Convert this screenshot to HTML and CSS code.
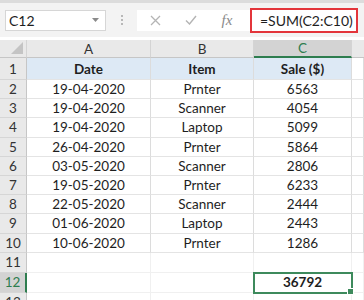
FILE: index.html
```html
<!DOCTYPE html>
<html lang="en">
<head>
    <meta charset="UTF-8">
    <meta name="viewport" content="width=device-width, initial-scale=1.0">
    <title>Sales sheet</title>
    <link rel="stylesheet" href="styles.css">
</head>
<body>
    <!-- Name box and formula bar -->
    <header class="toolbar">
        <div class="namebox">
            <span>C12</span>
            <svg class="caret" width="7" height="4" viewBox="0 0 7 4"><path d="M0 0h7L3.5 4z" fill="#8a8a8a"/></svg>
        </div>
        <div class="grip"><i></i><i></i><i></i></div>
        <div class="formula">
            <span class="btn">
                <svg width="11" height="11" viewBox="0 0 11 11"><path d="M1 1l9 9M10 1l-9 9" stroke="#b4b4b4" stroke-width="1.3"/></svg>
            </span>
            <span class="btn">
                <svg width="12" height="10" viewBox="0 0 12 10"><path d="M1 5.5l3.5 3.5L11 1" stroke="#b4b4b4" stroke-width="1.4" fill="none"/></svg>
            </span>
            <span class="btn fx">fx</span>
            <div class="input">=SUM(C2:C10)</div>
        </div>
    </header>

    <!-- Worksheet -->
    <main class="sheet">
        <div class="corner"><span class="tri"></span></div>
        <div class="colhead">A</div>
        <div class="colhead">B</div>
        <div class="colhead active">C</div>
        <div class="colhead blank"></div>

        <div class="rowhead">1</div>
        <div class="cell title">Date</div>
        <div class="cell title">Item</div>
        <div class="cell title">Sale ($)</div>
        <div class="cell"></div>

        <div class="rowhead">2</div><div class="cell">19-04-2020</div><div class="cell">Prnter</div><div class="cell">6563</div><div class="cell"></div>
        <div class="rowhead">3</div><div class="cell">19-04-2020</div><div class="cell">Scanner</div><div class="cell">4054</div><div class="cell"></div>
        <div class="rowhead">4</div><div class="cell">19-04-2020</div><div class="cell">Laptop</div><div class="cell">5099</div><div class="cell"></div>
        <div class="rowhead">5</div><div class="cell">26-04-2020</div><div class="cell">Prnter</div><div class="cell">5864</div><div class="cell"></div>
        <div class="rowhead">6</div><div class="cell">03-05-2020</div><div class="cell">Scanner</div><div class="cell">2806</div><div class="cell"></div>
        <div class="rowhead">7</div><div class="cell">19-05-2020</div><div class="cell">Prnter</div><div class="cell">6233</div><div class="cell"></div>
        <div class="rowhead">8</div><div class="cell">22-05-2020</div><div class="cell">Scanner</div><div class="cell">2444</div><div class="cell"></div>
        <div class="rowhead">9</div><div class="cell">01-06-2020</div><div class="cell">Laptop</div><div class="cell">2443</div><div class="cell"></div>
        <div class="rowhead">10</div><div class="cell">10-06-2020</div><div class="cell">Prnter</div><div class="cell">1286</div><div class="cell"></div>

        <div class="rowhead">11</div><div class="cell empty"></div><div class="cell empty"></div><div class="cell empty"></div><div class="cell empty"></div>
        <div class="rowhead active">12</div><div class="cell empty"></div><div class="cell empty"></div>
        <div class="cell total">36792<span class="handle"></span></div>
        <div class="cell empty"></div>
        <div class="rowhead">13</div><div class="cell empty"></div><div class="cell empty"></div><div class="cell empty"></div><div class="cell empty"></div>
    </main>
</body>
</html>
```

FILE: styles.css
```css
/* Global styles */
body {
    margin: 0;
    padding: 0;
    background-color: #fff;
    font-family: Lato, "Open Sans", sans-serif;
    color: #1e1e1e;
    overflow: hidden;
}

/* Toolbar styles */
.toolbar {
    height: 37px;
    border-top: 3px solid #dcdcdc;
    background-color: #f3f3f3;
    display: flex;
    align-items: center;
    box-sizing: border-box;
}

.namebox {
    margin-left: 5px;
    width: 101px;
    height: 21px;
    box-sizing: border-box;
    background-color: #fff;
    border: 1px solid #d6d6d6;
    display: flex;
    align-items: center;
    justify-content: space-between;
    padding: 0 6px 0 3px;
    font-size: 14px;
}

.grip {
    width: 31px;
    display: flex;
    flex-direction: column;
    align-items: center;
    gap: 2px;
}

.grip i {
    width: 2px;
    height: 2px;
    background-color: #b8b8b8;
}

.formula {
    flex: 1;
    margin-right: 6px;
    height: 21px;
    background-color: #fff;
    display: flex;
    align-items: center;
}

.btn {
    width: 36px;
    display: flex;
    justify-content: center;
    align-items: center;
}

.btn.fx {
    font-family: "Liberation Serif", serif;
    font-style: italic;
    font-size: 15px;
    color: #8a8a8a;
}

.input {
    margin-left: 5px;
    height: 25px;
    flex: 1;
    box-sizing: border-box;
    border: 2px solid #e3353b;
    display: flex;
    align-items: center;
    padding-left: 8px;
    font-size: 14px;
    color: #1e1e1e;
}

/* Worksheet styles */
.sheet {
    margin-top: 3px;
    display: grid;
    grid-template-columns: 27px 124px 103px 98px 1fr;
    grid-template-rows: 18px 22px repeat(9, 19.2px) 20px 20px 20px;
    font-size: 13.5px;
}

.corner {
    background-color: #e9e9e9;
    border-right: 1px solid #d4d4d4;
    border-bottom: 1px solid #c6c6c6;
    position: relative;
}

.tri {
    position: absolute;
    right: 3px;
    bottom: 3px;
    width: 0;
    height: 0;
    border-left: 12px solid transparent;
    border-bottom: 12px solid #c4c4c4;
}

.colhead {
    background-color: #e9e9e9;
    border-right: 1px solid #d4d4d4;
    border-bottom: 1px solid #c6c6c6;
    display: flex;
    align-items: center;
    justify-content: center;
    color: #333;
}

.colhead.blank {
    border-right: none;
}

.colhead.active {
    background-color: #d3d3d3;
    border-bottom: 2px solid #2e7d4f;
    color: #2e7d4f;
}

.rowhead {
    background-color: #e9e9e9;
    border-right: 1px solid #c6c6c6;
    border-bottom: 1px solid #d6d6d6;
    display: flex;
    align-items: center;
    justify-content: center;
    color: #333;
}

.rowhead.active {
    background-color: #d3d3d3;
    border-right: 2px solid #2e7d4f;
    color: #2e7d4f;
}

.cell {
    border-right: 1px solid #dcdcdc;
    border-bottom: 1px solid #e4e4e4;
    display: flex;
    align-items: center;
    justify-content: center;
    box-sizing: border-box;
}

.cell.title {
    background-color: #dde9f5;
    font-weight: bold;
}

.cell.empty {
    border-right-color: #f0f0f0;
    border-bottom-color: #f0f0f0;
}

.cell.total {
    position: relative;
    font-weight: bold;
    border-right-color: #f0f0f0;
    border-bottom-color: #f0f0f0;
    outline: 2px solid #3d8a5c;
    outline-offset: -1px;
}

.handle {
    position: absolute;
    right: -3px;
    bottom: -3px;
    width: 5px;
    height: 5px;
    background-color: #3d8a5c;
    border: 1px solid #fff;
}
```
